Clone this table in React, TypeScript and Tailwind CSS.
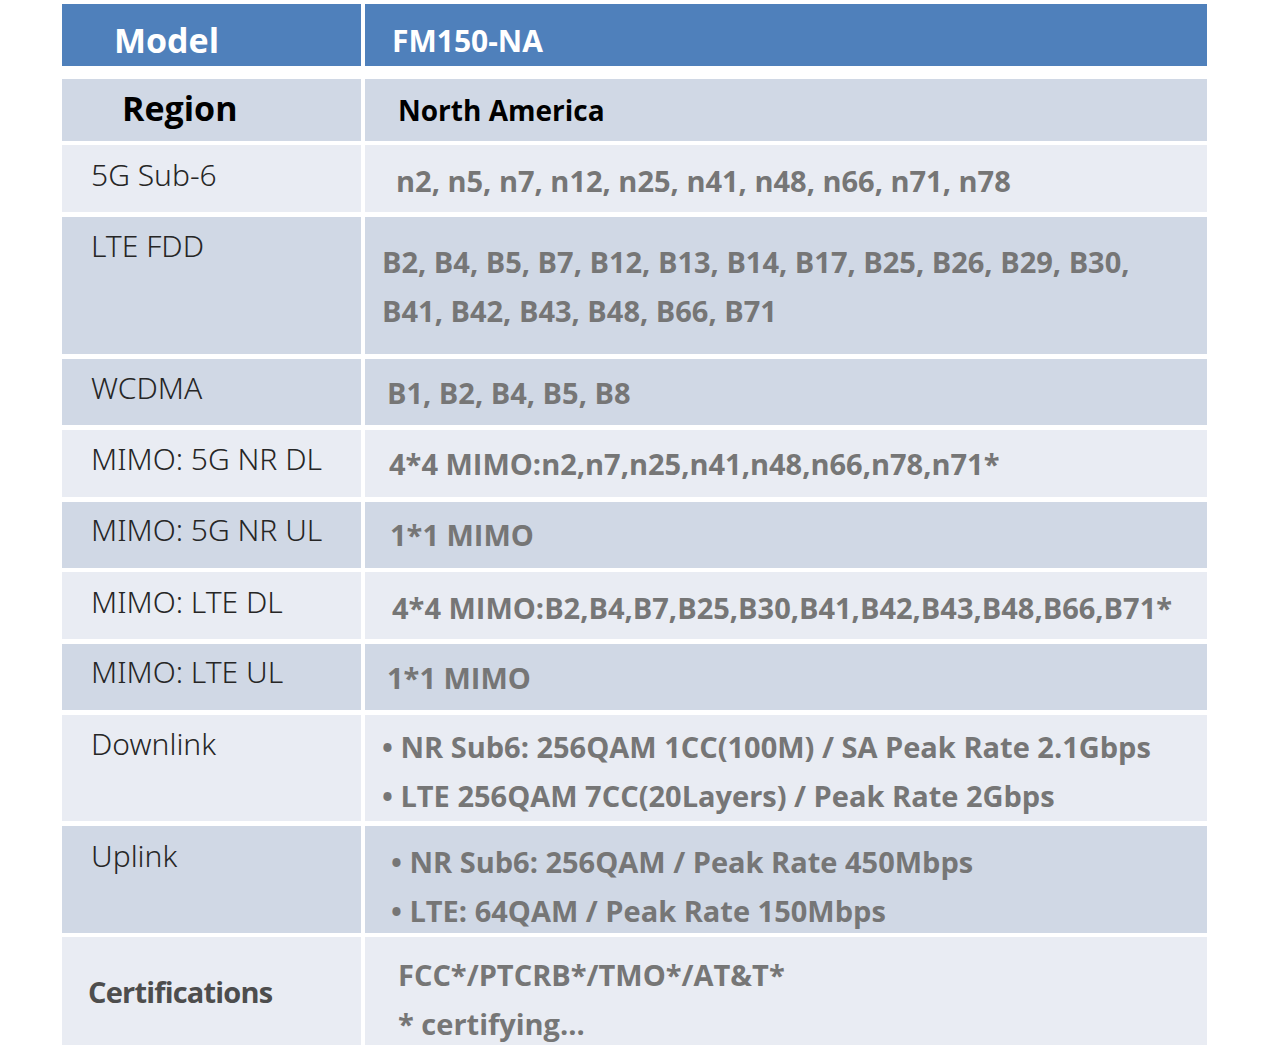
import React from "react";

type Row = {
  label: string;
  lines: string[];
  h: string;
  mt: string;
  tone: "blue" | "dark" | "light";
  labelPt: string;
  labelPl: string;
  textPt: string;
  textPl: string;
  kind?: "head" | "region" | "cert";
};

const rows: Row[] = [
  { label: "Model", lines: ["FM150-NA"], h: "h-[62px]", mt: "mt-0", tone: "blue", labelPt: "pt-[16px]", labelPl: "pl-[52px]", textPt: "pt-[12px]", textPl: "pl-[27px]", kind: "head" },
  { label: "Region", lines: ["North America"], h: "h-[62px]", mt: "mt-[13px]", tone: "dark", labelPt: "pt-[9px]", labelPl: "pl-[60px]", textPt: "pt-[7px]", textPl: "pl-[33px]", kind: "region" },
  { label: "5G Sub-6", lines: ["n2, n5, n7, n12, n25, n41, n48, n66, n71, n78"], h: "h-[67px]", mt: "mt-[4px]", tone: "light", labelPt: "pt-[10px]", labelPl: "pl-[29px]", textPt: "pt-[11px]", textPl: "pl-[31px]" },
  { label: "LTE FDD", lines: ["B2, B4, B5, B7, B12, B13, B14, B17, B25, B26, B29, B30,", "B41, B42, B43, B48, B66, B71"], h: "h-[137px]", mt: "mt-[5px]", tone: "dark", labelPt: "pt-[9px]", labelPl: "pl-[29px]", textPt: "pt-[20px]", textPl: "pl-[17px]" },
  { label: "WCDMA", lines: ["B1, B2, B4, B5, B8"], h: "h-[66px]", mt: "mt-[5px]", tone: "dark", labelPt: "pt-[9px]", labelPl: "pl-[29px]", textPt: "pt-[9px]", textPl: "pl-[22px]" },
  { label: "MIMO: 5G NR DL", lines: ["4*4 MIMO:n2,n7,n25,n41,n48,n66,n78,n71*"], h: "h-[67px]", mt: "mt-[5px]", tone: "light", labelPt: "pt-[9px]", labelPl: "pl-[29px]", textPt: "pt-[9px]", textPl: "pl-[24px]" },
  { label: "MIMO: 5G NR UL", lines: ["1*1 MIMO"], h: "h-[66px]", mt: "mt-[5px]", tone: "dark", labelPt: "pt-[8px]", labelPl: "pl-[29px]", textPt: "pt-[8px]", textPl: "pl-[25px]" },
  { label: "MIMO: LTE DL", lines: ["4*4 MIMO:B2,B4,B7,B25,B30,B41,B42,B43,B48,B66,B71*"], h: "h-[67px]", mt: "mt-[4px]", tone: "light", labelPt: "pt-[10px]", labelPl: "pl-[29px]", textPt: "pt-[11px]", textPl: "pl-[27px]" },
  { label: "MIMO: LTE UL", lines: ["1*1 MIMO"], h: "h-[66px]", mt: "mt-[5px]", tone: "dark", labelPt: "pt-[8px]", labelPl: "pl-[29px]", textPt: "pt-[9px]", textPl: "pl-[22px]" },
  { label: "Downlink", lines: ["• NR Sub6: 256QAM 1CC(100M) / SA Peak Rate 2.1Gbps", "• LTE 256QAM 7CC(20Layers) / Peak Rate 2Gbps"], h: "h-[106px]", mt: "mt-[5px]", tone: "light", labelPt: "pt-[9px]", labelPl: "pl-[29px]", textPt: "pt-[7px]", textPl: "pl-[17px]" },
  { label: "Uplink", lines: ["• NR Sub6: 256QAM / Peak Rate 450Mbps", "• LTE: 64QAM / Peak Rate 150Mbps"], h: "h-[107px]", mt: "mt-[5px]", tone: "dark", labelPt: "pt-[10px]", labelPl: "pl-[29px]", textPt: "pt-[11px]", textPl: "pl-[26px]" },
  { label: "Certifications", lines: ["FCC*/PTCRB*/TMO*/AT&T*", "* certifying..."], h: "h-[108px]", mt: "mt-[4px]", tone: "light", labelPt: "pt-[35px]", labelPl: "pl-[26px]", textPt: "pt-[13px]", textPl: "pl-[33px]", kind: "cert" },
];

const toneBg = {
  blue: "bg-[#4f80bb]",
  dark: "bg-[#d0d8e5]",
  light: "bg-[#e9ecf3]",
};

function Label({ row }: { row: Row }) {
  if (row.kind === "head") {
    return <div className="font-['Open_Sans',sans-serif] text-[34px] font-bold leading-[40px] text-white">{row.label}</div>;
  }
  if (row.kind === "region") {
    return <div className="font-['Open_Sans',sans-serif] text-[34px] font-bold leading-[40px] text-black">{row.label}</div>;
  }
  if (row.kind === "cert") {
    return <div className="font-['Open_Sans',sans-serif] text-[29px] font-bold leading-[40px] tracking-[-0.8px] text-[#4d4d4d]">{row.label}</div>;
  }
  return <div className="font-['Noto_Sans',sans-serif] text-[30px] font-light leading-[40px] text-[#262626]">{row.label}</div>;
}

function Value({ row }: { row: Row }) {
  if (row.kind === "head") {
    return <div className="font-['Open_Sans',sans-serif] text-[30px] font-bold leading-[49px] text-white">{row.lines[0]}</div>;
  }
  if (row.kind === "region") {
    return <div className="font-['Open_Sans',sans-serif] text-[28px] font-bold leading-[49px] text-black">{row.lines[0]}</div>;
  }
  return (
    <div className="font-['Open_Sans',sans-serif] text-[29px] font-bold leading-[49px] text-[#767676]">
      {row.lines.map((l) => (
        <div key={l} className="whitespace-nowrap">{l}</div>
      ))}
    </div>
  );
}

export default function App() {
  return (
    <div className="h-[1047px] w-[1280px] overflow-hidden bg-white pl-[62px] pt-[4px]">
      <div className="flex flex-col">
        {rows.map((row) => (
          <div key={row.label} className={`grid grid-cols-[299px_842px] gap-x-[4px] overflow-hidden ${row.h} ${row.mt}`}>
            <div className={`overflow-hidden ${toneBg[row.tone]} ${row.labelPt} ${row.labelPl}`}>
              <Label row={row} />
            </div>
            <div className={`overflow-hidden ${toneBg[row.tone]} ${row.textPt} ${row.textPl}`}>
              <Value row={row} />
            </div>
          </div>
        ))}
      </div>
    </div>
  );
}
